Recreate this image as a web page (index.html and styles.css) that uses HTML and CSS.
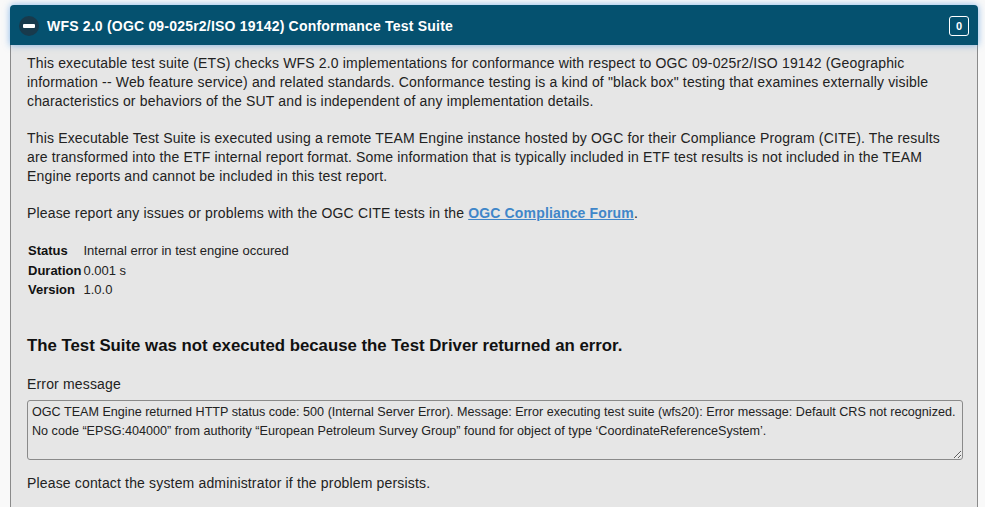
FILE: index.html
```html
<!DOCTYPE html>
<html>
<head>
<meta charset="utf-8">
<link rel="stylesheet" href="styles.css">
</head>
<body>
<div class="panel">
  <div class="header">
    <span class="collapse"><span class="bar"></span></span>
    <span class="title">WFS 2.0 (OGC 09-025r2/ISO 19142) Conformance Test Suite</span>
    <span class="count">0</span>
  </div>
  <div class="content">
    <p>This executable test suite (ETS) checks WFS 2.0 implementations for conformance with respect to OGC 09-025r2/ISO 19142 (Geographic information -- Web feature service) and related standards. Conformance testing is a kind of "black box" testing that examines externally visible characteristics or behaviors of the SUT and is independent of any implementation details.</p>
    <p>This Executable Test Suite is executed using a remote TEAM Engine instance hosted by OGC for their Compliance Program (CITE). The results are transformed into the ETF internal report format. Some information that is typically included in ETF test results is not included in the TEAM Engine reports and cannot be included in this test report.</p>
    <p>Please report any issues or problems with the OGC CITE tests in the <a class="link" href="#">OGC Compliance Forum</a>.</p>
    <table class="meta">
      <tr><th>Status</th><td>Internal error in test engine occured</td></tr>
      <tr><th>Duration</th><td>0.001 s</td></tr>
      <tr><th>Version</th><td>1.0.0</td></tr>
    </table>
    <h3 class="error-title">The Test Suite was not executed because the Test Driver returned an error.</h3>
    <label class="label">Error message</label>
    <textarea class="message" readonly>OGC TEAM Engine returned HTTP status code: 500 (Internal Server Error). Message: Error executing test suite (wfs20): Error message: Default CRS not recognized. No code “EPSG:404000” from authority “European Petroleum Survey Group” found for object of type ‘CoordinateReferenceSystem’.</textarea>
    <p class="contact">Please contact the system administrator if the problem persists.</p>
  </div>
</div>
</body>
</html>
```

FILE: styles.css
```css
html, body {
  margin: 0;
  padding: 0;
  background: #f9f9f9;
  font-family: "Liberation Sans", Arial, sans-serif;
  color: #222;
}
body {
  padding: 5px 7px 0 10px;
}
.panel {
  width: 968px;
}
.header {
  display: flex;
  align-items: center;
  height: 40px;
  box-sizing: border-box;
  padding: 2px 9px 0 9px;
  background: #05516f;
  border-radius: 4px 4px 0 0;
  box-shadow: 0 0 7px rgba(40, 130, 220, 0.55);
  color: #fff;
  position: relative;
  z-index: 1;
}
.collapse {
  width: 20px;
  height: 20px;
  border-radius: 50%;
  background: #183a4c;
  display: flex;
  align-items: center;
  justify-content: center;
  margin-right: 8px;
}
.bar {
  width: 12px;
  height: 4px;
  background: #fff;
  border-radius: 1px;
}
.title {
  font-weight: bold;
  font-size: 14px;
  letter-spacing: 0.2px;
  flex: 1;
}
.count {
  width: 18px;
  height: 18px;
  border: 1px solid #fff;
  border-radius: 3px;
  font-size: 11px;
  font-weight: bold;
  display: flex;
  align-items: center;
  justify-content: center;
}
.content {
  background: #e6e6e6;
  border-left: 1px solid #8a8a8a;
  border-right: 1px solid #8a8a8a;
  padding: 9px 15px 20px 16px;
  font-size: 14px;
  line-height: 19px;
  letter-spacing: 0.16px;
}
.content p {
  margin: 0 0 18px 0;
}
.link {
  color: #3f86c9;
  font-weight: bold;
  text-decoration: underline;
}
.meta {
  border-collapse: collapse;
  font-size: 13px;
  line-height: 19.5px;
  letter-spacing: 0;
  margin: 0;
}
.meta th {
  text-align: left;
  font-weight: bold;
  padding: 0 2px 0 1px;
  color: #111;
}
.meta td {
  padding: 0;
}
.error-title {
  font-size: 16.8px;
  font-weight: bold;
  letter-spacing: 0;
  margin: 36px 0 19px 0;
  color: #111;
  line-height: 20px;
}
.label {
  display: block;
  margin-bottom: 6px;
}
.message {
  display: block;
  width: 936px;
  height: 60px;
  box-sizing: border-box;
  background: #e6e6e6;
  border: 1px solid #8a8a8a;
  border-radius: 3px;
  font-family: "Liberation Sans", Arial, sans-serif;
  font-size: 12.6px;
  line-height: 19px;
  letter-spacing: 0;
  color: #222;
  padding: 2px 4px;
  margin: 0 0 14px 0;
  resize: vertical;
  outline: none;
}
.content p.contact {
  margin: 0;
}
```
